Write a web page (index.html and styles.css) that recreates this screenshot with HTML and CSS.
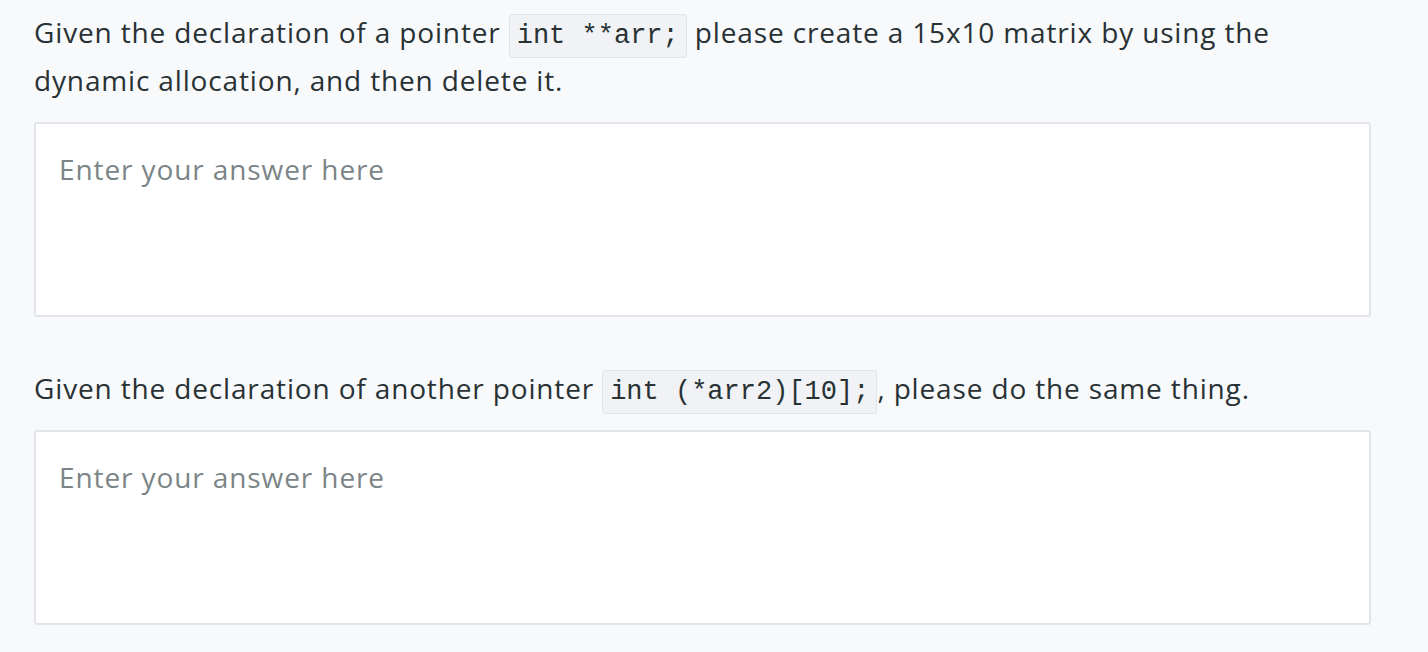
FILE: index.html
```html
<!DOCTYPE html>
<html>
<head>
<meta charset="utf-8">
<link rel="stylesheet" href="styles.css">
</head>
<body>
<div class="page">
  <div class="question">
    <p class="prompt">Given the declaration of a pointer <code>int **arr;</code> please create a 15x10 matrix by using the dynamic allocation, and then delete it.</p>
    <textarea class="answer" placeholder="Enter your answer here"></textarea>
  </div>
  <div class="question">
    <p class="prompt">Given the declaration of another pointer <code>int (*arr2)[10];</code>, please do the same thing.</p>
    <textarea class="answer" placeholder="Enter your answer here"></textarea>
  </div>
</div>
</body>
</html>
```
FILE: styles.css
```css
html, body {
  margin: 0;
  padding: 0;
  background: #f8f9fb;
}
.page {
  padding: 8px 58px 0 34px;
  font-family: "Open Sans", sans-serif;
  color: #283235;
}
.question {
  display: flex;
  flex-direction: column;
}
.prompt {
  margin: 0;
  font-size: 28px;
  letter-spacing: 0.85px;
  line-height: 48px;
  width: 1336px;
}
code {
  font-family: "Liberation Mono", monospace;
  font-size: 27px;
  letter-spacing: 0;
  line-height: 1;
  background: #f0f2f5;
  border: 1px solid #e1e4e8;
  border-radius: 3px;
  padding: 6px 7px;
}
.answer {
  display: block;
  box-sizing: border-box;
  width: 1337px;
  height: 195px;
  margin: 18px 0 47px;
  padding: 24px 23px;
  border: 2px solid #e1e5ea;
  border-radius: 3px;
  background: #fff;
  font-family: "Open Sans", sans-serif;
  font-size: 28px;
  letter-spacing: 0.9px;
  line-height: 42px;
  resize: none;
}
.answer::placeholder {
  color: #7b8587;
  opacity: 1;
}
```
